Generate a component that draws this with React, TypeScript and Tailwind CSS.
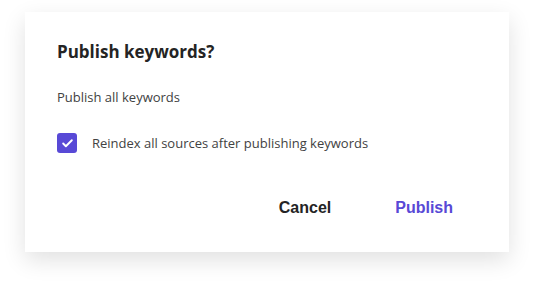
import { Check } from "lucide-react";

export default function App() {
  return (
    <div className="h-[282px] w-[534px] bg-white pl-[25px] pt-[12px]" style={{ fontFamily: "'Open Sans', sans-serif" }}>
      <div className="flex h-[240px] w-[484px] flex-col bg-white px-[32px] pt-[28px] shadow-[0_8px_22px_rgba(0,0,0,0.12)]">
        <h1 className="text-[17px] font-bold leading-[24px] text-[#242424]">Publish keywords?</h1>
        <p className="mt-[24px] text-[13px] leading-[18px] text-[#424242]">Publish all keywords</p>
        <label className="mt-[27px] flex items-center gap-[15px]">
          <span className="flex h-[20px] w-[20px] items-center justify-center rounded-[3px] bg-[#5849d6]">
            <Check className="h-[13px] w-[13px] text-white" strokeWidth={3.5} />
          </span>
          <span className="text-[13px] leading-[18px] text-[#424242]">Reindex all sources after publishing keywords</span>
        </label>
        <div className="mt-[45px] flex justify-end gap-[64px] pr-[24px]" style={{ fontFamily: "'Liberation Sans', Arial, sans-serif" }}>
          <button className="text-[16px] font-bold leading-[20px] text-[#242424]">Cancel</button>
          <button className="text-[16px] font-bold leading-[20px] text-[#5849d6]">Publish</button>
        </div>
      </div>
    </div>
  );
}
